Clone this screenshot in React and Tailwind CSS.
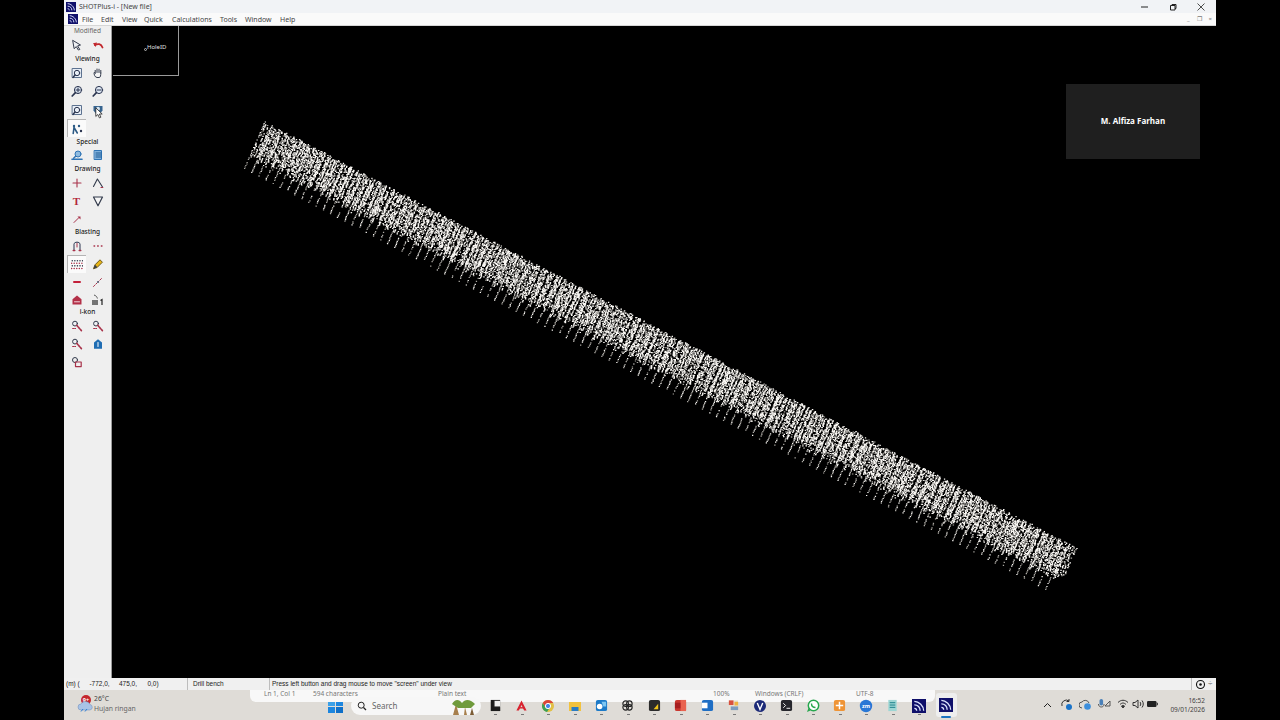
import React from 'react';

const FONT = 'font-["Noto_Sans","Liberation_Sans",sans-serif]';
const RED = '#a8324a';
const NAVY = '#2b3550';
const BLUE = '#2f74b5';

// blast pattern: one dotted trace per hole, seeded so every render is the same
const buildPattern = () => {
  let seed = 7;
  const rnd = () => {
    seed = (seed * 16807) % 2147483647;
    return seed / 2147483647;
  };
  const bright = [];
  const dim = [];
  const cols = 112;
  for (let i = 0; i <= cols; i += 1) {
    const t = i / cols;
    const px = 264 + t * 801;
    const py = 122 + t * 421;
    // long front trace, it gives the visible tail
    for (let d = 0; d < 47; d += 1.5) {
      if (rnd() < 0.8) {
        const seg = `M${(px - d * 0.44 + rnd() * 0.8).toFixed(1)} ${(py + d).toFixed(1)}h1.3`;
        if (d < 34 || rnd() > 0.55) bright.push(seg);
        else dim.push(seg);
      }
    }
    // shorter rows behind it fill the dense upper part of the band
    for (let row = 1; row < 6; row += 1) {
      const sx = px + row * 2.1 - rnd();
      const sy = py + row * 1.2 + rnd() * 3 - 1;
      const len = 37 - row * 2;
      for (let d = 0; d < len; d += 1.2) {
        if (rnd() < 0.74) {
          const seg = `M${(sx - d * 0.44 + (rnd() - 0.5) * 1.6).toFixed(1)} ${(sy + d).toFixed(1)}h1.5`;
          if (rnd() > 0.22) bright.push(seg);
          else dim.push(seg);
        }
      }
    }
  }
  return { bright: bright.join(''), dim: dim.join('') };
};

const pattern = buildPattern();

const BlastPattern = () => (
  <svg className="absolute left-0 top-0" width="1104" height="652" viewBox="112 26 1104 652">
    <path d={pattern.dim} stroke="#a9a6a0" strokeWidth="1.2" fill="none" />
    <path d={pattern.bright} stroke="#f8f6f2" strokeWidth="1.2" fill="none" />
  </svg>
);

const Ico = ({ children, size = 12 }) => (
  <svg width={size} height={size} viewBox="0 0 12 12" fill="none" strokeLinecap="round" strokeLinejoin="round">
    {children}
  </svg>
);

const Magnifier = ({ sign }) => (
  <Ico>
    <circle cx="7" cy="5" r="3.6" stroke={NAVY} fill="#dfe8f4" />
    <path d="M4.4 7.7 1.2 11" stroke={NAVY} strokeWidth="1.7" />
    <path d={sign === '+' ? 'M5 5h4M7 3v4' : 'M5 5h4'} stroke={NAVY} />
  </Ico>
);

const ZoomBox = () => (
  <Ico>
    <path d="M1.5 1.5h9v9h-9z" stroke="#5d7290" fill="#e8eef6" />
    <circle cx="6" cy="6" r="2.7" stroke={NAVY} />
    <path d="M4 8 2 10.5" stroke={NAVY} strokeWidth="1.4" />
  </Ico>
);

const Pointer = () => (
  <Ico>
    <path d="M2 1.500 9.500 6 6.600 6.900 8.800 10.500 7.300 11 5.300 7.600 3.400 9.400z" stroke="#333b4c" fill="#eef0f3" />
  </Ico>
);

const Undo = () => (
  <Ico>
    <path d="M10.500 8.500C9 4.600 6 4.400 3 6" stroke="#c1272d" strokeWidth="1.800" />
    <path d="M1 4.200 5 3.400 3.600 8z" fill="#c1272d" />
  </Ico>
);

const Hand = () => (
  <Ico>
    <path d="M3.200 6.200V3.400M5 5.500V2M7 5.500V2.200M8.800 6V3.400M3.200 6.200 2.200 5.400C1.600 6.600 2.800 10.500 5 10.500h2.200c1.300 0 1.600-2 1.600-4.500" stroke="#333b4c" fill="#f5f5f5" />
  </Ico>
);

const Rotate = () => (
  <Ico>
    <path d="M1.500 2h9v4.500l-2.800 3.800H4.300L1.500 6.500z" fill="#37648f" />
    <circle cx="6" cy="4.800" r="2" fill="#d6e4f0" />
  </Ico>
);

const Scatter = () => (
  <Ico>
    <path d="M3 4.500 2.200 10.500M3 4.500 6.300 10" stroke="#2c5a85" strokeWidth="1.600" />
    <circle cx="8" cy="3" r="1.200" fill="#2c5a85" />
    <circle cx="10" cy="8" r="1.200" fill={NAVY} />
    <circle cx="3" cy="3" r="1.200" fill="#2c5a85" />
  </Ico>
);

const PaperBlue = () => (
  <Ico>
    <path d="M2.500 1.500h7v9h-7z" fill="#7fb0dc" stroke={BLUE} />
    <path d="M4 4h5M4 6h5M4 8h5" stroke="#1e5b93" />
  </Ico>
);

const SearchBlue = () => (
  <Ico>
    <path d="M1 10.200h10" stroke={BLUE} strokeWidth="1.600" />
    <circle cx="7" cy="5" r="3" fill="#8fbbe0" stroke={BLUE} />
    <path d="M4.600 7.200 2.600 9.200" stroke={BLUE} strokeWidth="1.400" />
  </Ico>
);

const Plus = () => (
  <Ico>
    <path d="M6 2v8M2 6h8" stroke={RED} strokeWidth="1.100" />
  </Ico>
);

const Polyline = () => (
  <Ico>
    <path d="M1.500 9.500 5.400 2 10.500 10" stroke="#333b4c" strokeWidth="1.100" />
    <path d="M9 10.500h1.800" stroke={RED} strokeWidth="1.200" />
  </Ico>
);

const LetterT = () => (
  <span className='text-[11px] leading-none font-bold text-[#b3263a] font-["Liberation_Serif",serif]'>T</span>
);

const Triangle = () => (
  <Ico>
    <path d="M1.500 2h9L6 10.800z" stroke="#333b4c" strokeWidth="1.200" fill="#f5f5f5" />
  </Ico>
);

const ArrowRed = () => (
  <Ico>
    <path d="M3 9.500 8 4.500" stroke={RED} />
    <path d="M6.500 3.500h3v3z" fill={RED} />
  </Ico>
);

const Gate = () => (
  <Ico>
    <path d="M3 10.500V4.200C3 1.500 9 1.500 9 4.200v6.300" stroke={NAVY} />
    <path d="M2.200 10.500h1.600M8.200 10.500h1.600" stroke={RED} strokeWidth="1.400" />
    <path d="M6 3.500V7" stroke={RED} />
  </Ico>
);

const Dots = () => (
  <Ico>
    <path d="M2 6h.7M5.600 6h.7M9.300 6h.7" stroke={RED} strokeWidth="1.300" />
  </Ico>
);

const DotGrid = () => (
  <svg width="12" height="12" viewBox="0 0 14 13">
    {[1.5, 4.5, 7.5, 10.5].map((y, r) =>
      [1.5, 4.5, 7.5, 10.5, 13.5].map((x) => (
        <circle key={`${x}-${y}`} cx={x - (r % 2) * 0.8} cy={y} r="0.9" fill={r % 2 ? RED : '#333b4c'} />
      )),
    )}
  </svg>
);

const Pencil = () => (
  <Ico>
    <path d="M1.600 10.400 3 6.800 8 1.800l2.400 2.400-5 5z" fill="#e7b417" stroke="#6d5a1a" />
    <path d="M1.600 10.400 3 6.800l2.400 2.400z" fill="#333b4c" />
  </Ico>
);

const Dash = () => (
  <Ico>
    <path d="M3 6h6" stroke="#c3203a" strokeWidth="2" />
  </Ico>
);

const DottedLine = () => (
  <Ico>
    <path d="M1.500 10.500 10.500 1.500" stroke={RED} strokeDasharray="1.600 1.600" />
    <circle cx="6" cy="6" r="1.100" fill="#58637a" />
  </Ico>
);

const House = () => (
  <Ico>
    <path d="M1.500 5.200 6 1.400l4.500 3.800v5.400h-9z" fill="#b33048" />
    <path d="M3.500 7.800h5" stroke="#f3d7dc" />
  </Ico>
);

const Numbered = () => (
  <svg width="13" height="12" viewBox="0 0 13 12" fill="none">
    <path d="M3 1c2 .6 3 1.800 3.400 3.500" stroke="#555" />
    <path d="M2 6v5M4 6v5M6 6v5" stroke="#222" strokeWidth="1.200" />
    <path d="M9.500 6.500 11 5.500V11" stroke="#222" strokeWidth="1.200" />
  </svg>
);

const Detonator = ({ tail = RED }) => (
  <Ico>
    <circle cx="4" cy="3.600" r="2.400" stroke="#333b4c" fill="#eef0f3" />
    <path d="M5.800 5.400 10.400 10.600" stroke={tail} strokeWidth="1.600" strokeDasharray="1.800 .8" />
    <path d="M1.600 8.500h3.500" stroke={tail} strokeDasharray="1 1" />
  </Ico>
);

const BlueTag = () => (
  <Ico>
    <path d="M2 4.400 6 1.200l4 3.200v6.400H2z" fill="#1f6db3" />
    <path d="M6 4.500v4" stroke="#fff" />
  </Ico>
);

const Linked = () => (
  <Ico>
    <circle cx="4" cy="4" r="2.500" stroke="#333b4c" />
    <path d="M4.500 6h5.700v4.600H4.500z" stroke={RED} strokeWidth="1.200" />
  </Ico>
);

const sidebar = [
  { label: 'Modified', text: 'font-normal text-[#666]', rows: [[Pointer, Undo]] },
  { label: 'Viewing', rows: [[ZoomBox, Hand], [() => <Magnifier sign="+" />, () => <Magnifier sign="-" />], [ZoomBox, Rotate, 'mt-px'], [Scatter, null, 'on']] },
  { label: 'Special', rows: [[SearchBlue, PaperBlue, '-mt-px']] },
  { label: 'Drawing', rows: [[Plus, Polyline], [LetterT, Triangle], [ArrowRed, null]] },
  { label: 'Blasting', cls: '-mt-px', rows: [[Gate, Dots], [DotGrid, Pencil, 'on'], [Dash, DottedLine], [House, Numbered]] },
  { label: 'i-kon', cls: '-mt-[2px]', rows: [[Detonator, Detonator], [Detonator, BlueTag], [Linked, null]] },
];

const Sidebar = () => (
  <div className="relative w-12 shrink-0 flex flex-col border-r border-[#9b9b9b] bg-[#efefef] pl-[3px]">
    {sidebar.map((group) => (
      <div key={group.label} className={group.cls}>
        <div className={`h-[10px] pt-px pr-[3px] flex items-center justify-center text-[6.5px] leading-none ${group.text || 'font-medium text-[#222]'}`}>{group.label}</div>
        {group.rows.map(([Left, Right, mod], n) => (
          <div key={n} className={`h-[18px] flex ${mod === 'mt-px' || mod === '-mt-px' ? mod : ''}`}>
            <div className={`w-[19px] h-[18px] flex items-center justify-center ${mod === 'on' ? 'bg-[#fbfbfb] border-t border-l border-[#b4b4b4]' : ''}`}>
              <Left />
            </div>
            <div className="ml-[2px] w-[19px] h-[18px] flex items-center justify-center">{Right ? <Right /> : null}</div>
          </div>
        ))}
      </div>
    ))}
    <svg className="absolute left-[31px] top-[81px]" width="8" height="12" viewBox="0 0 8 12">
      <path d="M.8.8v8.600l2.100-1.900 1.500 3.400 1.500-.7-1.500-3.200h2.800z" fill="#fff" stroke="#222" strokeWidth=".8" />
    </svg>
  </div>
);

const Legend = () => (
  <div className="absolute left-px top-0 w-[66px] h-[50px] border-r-[1.5px] border-b-[1.5px] border-[#9a9a9a]">
    <span className="absolute left-[31px] top-[22px] rounded-full w-[3px] h-[3px] border-[0.5px] border-[#bdbdbd]" />
    <span className="absolute left-[34px] top-[17px] text-[6px] leading-[9px] text-[#e0e0e0]">HoleID</span>
  </div>
);

const NameTag = () => (
  <div className="absolute left-[954px] top-[58px] w-[134px] h-[75px] bg-[#1f1f1f] flex items-center justify-center pb-[2px]">
    <span className='text-[8px] font-bold text-white font-["Open_Sans",sans-serif]'>M. Alfiza Farhan</span>
  </div>
);

const Logo = ({ size = 10 }) => (
  <svg width={size} height={size} viewBox="0 0 12 12">
    <rect width="12" height="12" fill="#10106a" />
    <path d="M2 2c4 0 8 4 8 8M2 5c3 0 5 2 5 5M2 8c1.500 0 2 1 2 2" stroke="#dfe6ff" strokeWidth="1.100" fill="none" />
  </svg>
);

const menus = ['File', 'Edit', 'View', 'Quick', 'Calculations', 'Tools', 'Window', 'Help'];
const menuGaps = ['w-[19px]', 'w-[21px]', 'w-[22px]', 'w-[28px]', 'w-[48px]', 'w-[25px]', 'w-[35px]', 'w-[20px]'];

const TitleBar = () => (
  <div className="h-[13px] flex items-center bg-[#f1f3f6]">
    <div className="ml-[2px] mr-[3px]"><Logo /></div>
    <span className="text-[7px] leading-none text-[#444]">SHOTPlus-i - [New file]</span>
    <div className="ml-auto flex items-center text-[#222]">
      <svg width="8" height="8" viewBox="0 0 8 8" className="mr-[20px]"><path d="M0 4h7" stroke="#222" /></svg>
      <svg width="8" height="8" viewBox="0 0 8 8" className="mr-[20px]"><path d="M1.500 2.500h4.500v4.500h-4.500zM3 2.500v-1h4v4h-1" stroke="#222" fill="none" /></svg>
      <svg width="8" height="8" viewBox="0 0 8 8" className="mr-[11px]"><path d="M.5.5l7 7M7.500.5l-7 7" stroke="#222" strokeWidth=".8" /></svg>
    </div>
  </div>
);

const MenuBar = () => (
  <div className="h-[13px] flex items-center bg-[#fafafa] border-b border-[#d6d6d6]">
    <div className="ml-[4px] mr-[4px]"><Logo /></div>
    {menus.map((m, i) => (
      <span key={m} className={`${menuGaps[i]} text-[7px] leading-none text-[#444]`}>{m}</span>
    ))}
    <div className="ml-auto mr-[4px] flex items-center gap-[7px] text-[6px] leading-none text-[#777]">
      <span>_</span>
      <span>❐</span>
      <span>×</span>
    </div>
  </div>
);

const StatusBar = () => (
  <div className='h-3 flex items-center bg-[#f0f0f0] text-[6.5px] leading-none text-[#222] font-["Liberation_Sans",sans-serif]'>
    <div className="w-[124px] h-full flex items-center pl-[2px] border-r border-[#bdbdbd]">
      <span className="w-[19px]">(m) (</span>
      <span className="w-[29px] text-center">-772,0,</span>
      <span className="w-[28px] text-center">475,0,</span>
      <span className="w-[22px] text-center">0,0)</span>
    </div>
    <div className="w-[82px] h-full flex items-center pl-[5px] border-r border-[#bdbdbd]">Drill bench</div>
    <div className="flex-1 h-full flex items-center pl-[2px] border-r border-[#bdbdbd]">Press left button and drag mouse to move "screen" under view</div>
    <div className="w-[24px] flex items-center pl-[3px]">
      <svg width="11" height="11" viewBox="0 0 11 11" fill="none">
        <circle cx="5.500" cy="5.500" r="4" stroke="#111" strokeWidth="1.100" />
        <circle cx="5.500" cy="5.500" r="1.300" fill="#111" />
      </svg>
      <span className="ml-[2px] text-[8px] text-[#555]">÷</span>
    </div>
  </div>
);

const box = (fill, inner) => (
  <svg width="13" height="13" viewBox="0 0 14 14">
    <rect x="1" y="1" width="12" height="12" rx="2" fill={fill} />
    {inner}
  </svg>
);

const taskIcons = [
  <svg width="13" height="13" viewBox="0 0 14 14"><path d="M2 1h10v12H2z" fill="#2a2a2a" /><path d="M5 1v8h7v4H2V1z" fill="#1c1c1c" /><path d="M6 2h6v6H6z" fill="#f1f1f1" /></svg>,
  <svg width="13" height="13" viewBox="0 0 14 14"><path d="M7 1.500 12.500 12.500H9.800L7 6.500 4.200 12.500H1.500z" fill="#d8232f" /><path d="M4 9.500h6" stroke="#d8232f" strokeWidth="1.500" /></svg>,
  <svg width="14" height="14" viewBox="0 0 14 14"><circle cx="7" cy="7" r="6" fill="#e2c046" /><path d="M7 1a6 6 0 0 0-5.200 3L4 8 7 4h5.200A6 6 0 0 0 7 1z" fill="#d9453b" /><path d="M1.800 4A6 6 0 0 0 6 13l2.200-3.500H4.800z" fill="#3ba058" /><circle cx="7" cy="7" r="2.600" fill="#4384ea" stroke="#fff" /></svg>,
  <svg width="14" height="14" viewBox="0 0 14 14"><path d="M1 3h12v9H1z" fill="#f2c23e" /><path d="M3.500 8h7v4h-7z" fill="#2a7cc5" /></svg>,
  box('#1c7ac8', <g><circle cx="5" cy="8" r="3" fill="#fff" /><path d="M7 3h5v5H9z" fill="#7cc6f2" /></g>),
  <svg width="13" height="13" viewBox="0 0 14 14" fill="none" stroke="#222" strokeWidth="1.200"><circle cx="5" cy="5" r="3" /><circle cx="9" cy="5" r="3" /><circle cx="5" cy="9" r="3" /><circle cx="9" cy="9" r="3" /></svg>,
  box('#2b2b2b', <path d="M6 11 11 11V5z" fill="#f0c419" />),
  box('#c9372f', <g><path d="M7 1h6v12H7z" fill="#e9634f" /><rect x="1" y="4" width="6" height="6" fill="#a71e20" /></g>),
  box('#1f6ec4', <rect x="1" y="4" width="6" height="6" fill="#fff" />),
  <svg width="13" height="13" viewBox="0 0 14 14"><path d="M2 1.500h10v11H2z" fill="#e7e2d6" /><path d="M2 1.500h5v5H2z" fill="#d8503e" /><path d="M8 3h4v4H8z" fill="#efb340" /><path d="M4 8h8v4H4z" fill="#7d9cbe" /></svg>,
  <svg width="14" height="14" viewBox="0 0 14 14"><circle cx="7" cy="7" r="6" fill="#1c2a78" /><path d="M4.300 4 7 10.500 9.700 4" stroke="#fff" strokeWidth="1.400" fill="none" /></svg>,
  box('#26262c', <path d="M3.500 4.500 6 7l-2.500 2.500M7 10h4" stroke="#fff" fill="none" />),
  <svg width="14" height="14" viewBox="0 0 14 14"><circle cx="7.500" cy="6.500" r="5.200" fill="#fff" stroke="#27a74e" strokeWidth="1.500" /><path d="M1 13l1.500-4 2 2.400z" fill="#27a74e" /><path d="M5.500 4.500c0 2.500 1.500 4 4 4" stroke="#27a74e" strokeWidth="1.400" fill="none" /></svg>,
  box('#ef9436', <path d="M7 3v8M3 7h8" stroke="#fff" strokeWidth="1.600" />),
  <svg width="14" height="14" viewBox="0 0 14 14"><circle cx="7" cy="7" r="6.200" fill="#2877d6" /><text x="7" y="9" fontSize="5.500" textAnchor="middle" fill="#fff" fontWeight="700">zm</text></svg>,
  <svg width="13" height="13" viewBox="0 0 14 14"><path d="M2.500 1h9v12h-9z" fill="#9dd6d4" /><path d="M4 4h6M4 6.500h6M4 9h6" stroke="#157c86" /></svg>,
  <Logo size={14} />,
];

const Taskbar = () => (
  <div className="relative h-[30px] flex bg-[#dfdcd7] text-[#444]">
    <div className="absolute left-[186px] top-0 w-[685px] h-3 rounded-b-[6px] bg-[#f8f8f8] flex items-start pl-[14px] text-[6.500px] leading-[7px] text-[#777] overflow-hidden">
      <span className="w-[49px]">Ln 1, Col 1</span>
      <span className="w-[125px]">594 characters</span>
      <span className="w-[275px]">Plain text</span>
      <span className="w-[42px]">100%</span>
      <span className="w-[101px]">Windows (CRLF)</span>
      <span>UTF-8</span>
    </div>
    <div className="relative w-[12px] ml-[17px] mt-[5px]">
      <span className="absolute left-[0px] top-[0px] w-[10px] h-[10px] rounded-full bg-[#c5262c] text-white text-[5.500px] leading-[10px] text-center font-bold">9+</span>
      <svg className="absolute -left-[4px] top-[4px]" width="18" height="14" viewBox="0 0 18 14">
        <path d="M4 11a3 3 0 0 1 0-6 5 5 0 0 1 9 .5 2.800 2.800 0 0 1 0 5.500z" fill="#a9c3e6" stroke="#6b89b8" strokeWidth=".5" />
        <path d="M4 12.500 6 10M8 12.500 10 10" stroke="#2d7fd6" />
      </svg>
    </div>
    <div className="ml-[1px] mt-[4px] w-[46px] text-[6.800px] leading-[10px] text-[#444]">
      <div>26°C</div>
      <div className="text-[#666]">Hujan ringan</div>
    </div>
    <div className="ml-[188px] mt-[9px] w-[15px] h-[14px] grid grid-cols-2 gap-[1px] self-start">
      <span className="bg-[#3aa0e8]" />
      <span className="bg-[#1c86df]" />
      <span className="bg-[#1c86df]" />
      <span className="bg-[#0f6fc8]" />
    </div>
    <div className="relative ml-[8px] mt-[7px] w-[130px] h-[18px] rounded-full bg-[#f7f7f7] flex items-center pl-[6px]">
      <svg width="10" height="10" viewBox="0 0 10 10" fill="none">
        <circle cx="4.200" cy="4.200" r="3" stroke="#222" />
        <path d="M6.500 6.500 9 9" stroke="#222" strokeWidth="1.200" />
      </svg>
      <span className="ml-[5px] text-[8px] leading-none text-[#666]">Search</span>
      <svg className="absolute right-[1px] top-0" width="30" height="18" viewBox="0 0 30 18">
        <path d="M3 18 6 7l3 11zM14 18l1-8 2 8z" fill="#a77f4c" />
        <path d="M2 7c3-5 7-5 10-1 3-4 8-4 13 1l-4 4H8z" fill="#6f9a3c" />
        <path d="M20 18l2-7 2 7z" fill="#7c5d36" />
      </svg>
    </div>
    <div className="ml-px flex self-start">
      {taskIcons.map((icon, i) => (
        <div key={i} className="w-[26.500px] h-[30px] relative flex justify-center pt-[9px]">
          {icon}
          <span className="absolute bottom-[5px] left-[12px] w-[3px] h-[1px] bg-[#777]" />
        </div>
      ))}
      <div className="w-[26.500px] h-[30px] relative flex justify-center pt-[8px]">
        <div className="absolute left-[3px] top-[3px] w-[21px] h-[24px] rounded-[3px] bg-[#eeeeee]" />
        <div className="relative"><Logo size={14} /></div>
        <span className="absolute bottom-[2px] left-[8px] w-[10px] h-[2px] rounded bg-[#1a73c0]" />
      </div>
    </div>
    <div className="ml-[84px] flex items-start pt-[11px]">
      <svg width="9" height="8" viewBox="0 0 9 8" fill="none"><path d="M1 6l3.500-3.500L8 6" stroke="#222" /></svg>
      <svg className="ml-[8px] -mt-[3px]" width="13" height="13" viewBox="0 0 13 13" fill="none">
        <path d="M2 8a4.500 4.500 0 0 1 7-5M9 1v2.500H6.500" stroke="#333" />
        <circle cx="9" cy="9" r="3" fill="#1b74c9" />
      </svg>
      <svg className="ml-[6px] -mt-[3px]" width="13" height="13" viewBox="0 0 13 13" fill="none">
        <path d="M3 10a3 3 0 0 1 0-6 4 4 0 0 1 7 1" stroke="#555" />
        <circle cx="8.500" cy="8.500" r="3.300" fill="#3d8fdc" />
      </svg>
      <svg className="ml-[6px] -mt-[3px]" width="13" height="13" viewBox="0 0 13 13" fill="none">
        <rect x="1.500" y="1" width="3.600" height="6.500" rx="1.800" fill="#4a80b8" />
        <path d="M0.500 6c0 4 5.600 4 5.600 0" stroke="#555" />
        <path d="M12 3 7 8h5z" stroke="#555" />
      </svg>
      <svg className="ml-[6px] -mt-[2px]" width="12" height="10" viewBox="0 0 12 10" fill="none" stroke="#333">
        <path d="M1 3.500c3-3 7-3 10 0M3 5.500c2-2 4-2 6 0" />
        <path d="M6 9 4.500 7c1-.8 2-.8 3 0z" fill="#333" />
      </svg>
      <svg className="ml-[3px] -mt-[2px]" width="12" height="10" viewBox="0 0 12 10" fill="none" stroke="#333">
        <path d="M1 3.500h2L6 1v8L3 6.500H1z" />
        <path d="M8 3c1 1 1 3 0 4M10 1.500c1.700 2 1.700 5 0 7" />
      </svg>
      <svg className="ml-[3px] -mt-[1px]" width="11" height="8" viewBox="0 0 11 8">
        <rect x="0" y="1" width="9.500" height="6" rx="1.200" fill="#222" />
        <rect x="9.800" y="2.800" width="1" height="2.400" fill="#222" />
      </svg>
    </div>
    <div className="ml-auto mr-[11px] mt-[6px] text-right text-[6.500px] leading-[9px] text-[#444]">
      <div>16:52</div>
      <div>09/01/2026</div>
    </div>
  </div>
);

export default function App() {
  return (
    <div className={`w-[1280px] h-[720px] overflow-hidden bg-black px-16 ${FONT}`}>
      <div className="w-[1152px] h-[720px] flex flex-col">
        <TitleBar />
        <MenuBar />
        <div className="flex flex-1 min-h-0">
          <Sidebar />
          <div className="relative flex-1 bg-black overflow-hidden">
            <Legend />
            <BlastPattern />
            <NameTag />
          </div>
        </div>
        <StatusBar />
        <Taskbar />
      </div>
    </div>
  );
}
